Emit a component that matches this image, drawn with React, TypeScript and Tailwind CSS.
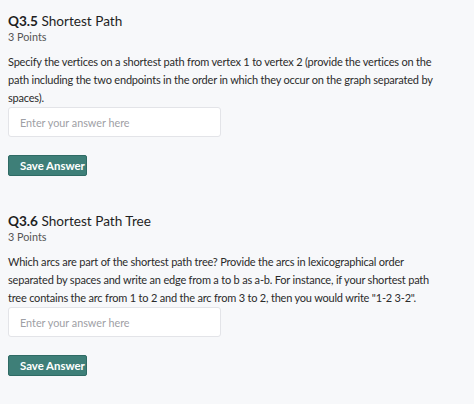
import React from 'react';

type Question = {
  num: string;
  title: string;
  points: string;
  prompt: string;
};

const questions: Question[] = [
  {
    num: 'Q3.5',
    title: 'Shortest Path',
    points: '3 Points',
    prompt:
      'Specify the vertices on a shortest path from vertex 1 to vertex 2 (provide the vertices on the path including the two endpoints in the order in which they occur on the graph separated by spaces).',
  },
  {
    num: 'Q3.6',
    title: 'Shortest Path Tree',
    points: '3 Points',
    prompt:
      'Which arcs are part of the shortest path tree? Provide the arcs in lexicographical order separated by spaces and write an edge from a to b as a-b. For instance, if your shortest path tree contains the arc from 1 to 2 and the arc from 3 to 2, then you would write "1-2 3-2".',
  },
];

function QuestionBlock({ q }: { q: Question }) {
  return (
    <div className="flex flex-col">
      <h3 className="text-[13.6px] leading-[18px] text-[#1f1f1f]">
        <span className="font-bold">{q.num}</span> {q.title}
      </h3>
      <p className="text-[10.8px] leading-[14px] text-[#555]">{q.points}</p>
      <p className="mt-[9px] w-[440px] text-[11px] leading-[18px] tracking-[-0.2px] text-[#2b2b2b]">{q.prompt}</p>
      <input
        type="text"
        placeholder="Enter your answer here"
        className="h-[30px] w-[213px] rounded-[3px] border border-[#e3e4e8] bg-white px-[11px] text-[10.8px] placeholder:text-[#9ea0a5] outline-none"
      />
      <button
        type="button"
        className="mt-[18px] h-[21px] w-[79px] rounded-[2px] border border-[#2f6b65] bg-[#3e7f78] text-left pl-[11px] text-[11.4px] font-bold text-white"
      >
        Save Answer
      </button>
    </div>
  );
}

export default function App() {
  return (
    <div
      className="h-[404px] w-[474px] overflow-hidden bg-[#f7f8fa] pl-[8px] pt-[12px]"
      style={{ fontFamily: 'Lato, "Open Sans", sans-serif' }}
    >
      <div className="flex flex-col gap-[36px]">
        {questions.map((q) => (
          <QuestionBlock key={q.num} q={q} />
        ))}
      </div>
    </div>
  );
}
